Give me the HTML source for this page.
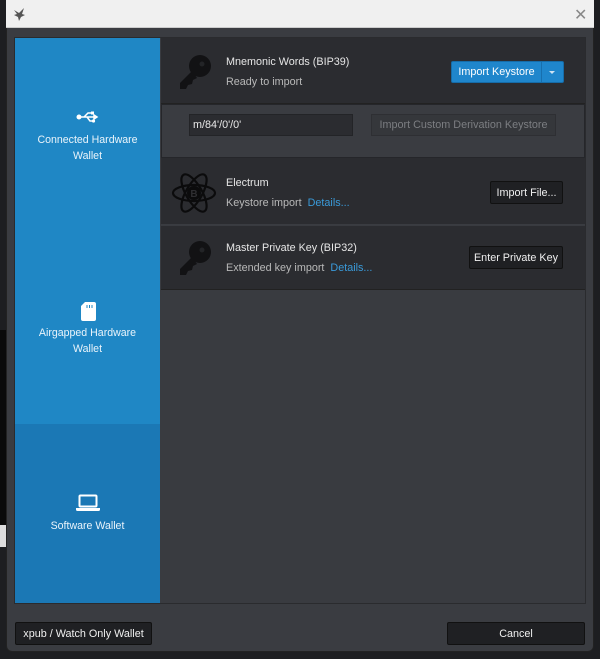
<!DOCTYPE html>
<html><head><meta charset="utf-8"><style>
*{margin:0;padding:0;box-sizing:border-box}
body{width:600px;height:659px;background:#1d1e21;position:relative;overflow:hidden;font-family:"Liberation Sans",sans-serif;font-size:10.8px;color:#e6e6e6}
.a{position:absolute}
.btn{position:absolute;background:#1f2023;border:1px solid #111;border-radius:2px;color:#f0f0f0;font-size:10.8px;display:flex;align-items:center;justify-content:center}
.lnk{color:#3a9ad9}
.sub{color:#b9b9b9}
.side{color:#eaf4fb;text-align:center;font-size:10.6px;line-height:16px}
</style></head><body>
<div class="a" style="left:0;top:330px;width:6px;height:195px;background:#0a0a0a"></div>
<div class="a" style="left:0;top:525px;width:6px;height:22px;background:#ddd"></div>
<div class="a" style="left:6px;top:0;width:588px;height:652px;background:#3a3c41;border-radius:0 0 6px 6px;border:1px solid #222"></div>
<div class="a" style="left:6px;top:0;width:588px;height:28px;background:#f0f0f0;border-bottom:1px solid #ccc"></div>
<svg class="a" style="left:11px;top:6px" width="16" height="16" viewBox="0 0 16 16"><path d="M3 4l5 3 5-5-2 6 3 1-4 2-2 4-1-4-4-2 3-1z" fill="#555"/></svg>
<div class="a" style="left:574px;top:5px;font-size:16px;color:#888">✕</div>
<div class="a" style="left:14px;top:37px;width:572px;height:567px;background:#393b40;border:1px solid #2a2b2e"></div>
<div class="a" style="left:15px;top:38px;width:145px;height:386px;background:#1f87c5"></div>
<div class="a" style="left:15px;top:424px;width:145px;height:179px;background:#1b78b5"></div>
<svg class="a" style="left:76px;top:110px" width="24" height="14" viewBox="0 0 24 14"><path d="M3 7h18M21 7l-3-2v4zM8 7l4-4h3M11 7l3 4h3" stroke="#fff" stroke-width="1.5" fill="none"/><circle cx="3" cy="7" r="2.5" fill="#fff"/><rect x="15" y="1.5" width="3" height="3" fill="#fff"/><circle cx="17.5" cy="11" r="1.6" fill="#fff"/></svg>
<div class="a side" style="left:15px;top:132px;width:145px">Connected Hardware<br>Wallet</div>
<svg class="a" style="left:81px;top:302px" width="15" height="19" viewBox="0 0 15 19"><path d="M4 0h9a2 2 0 0 1 2 2v15a2 2 0 0 1-2 2H2a2 2 0 0 1-2-2V4z" fill="#fff"/><path d="M6 3v3M8.5 3v3M11 3v3" stroke="#1f87c5" stroke-width="1"/></svg>
<div class="a side" style="left:15px;top:325px;width:145px">Airgapped Hardware<br>Wallet</div>
<svg class="a" style="left:76px;top:494px" width="24" height="18" viewBox="0 0 24 18"><rect x="3.5" y="1.5" width="17" height="11" rx="1" stroke="#fff" stroke-width="2" fill="none"/><path d="M0 14h24v1.5a1.5 1.5 0 0 1-1.5 1.5h-21A1.5 1.5 0 0 1 0 15.5z" fill="#fff"/></svg>
<div class="a side" style="left:15px;top:518px;width:145px">Software Wallet</div>
<div class="a" style="left:161px;top:38px;width:424px;height:66px;background:#2b2c30;border-bottom:1px solid #222"></div>
<div class="a" style="left:161px;top:104px;width:424px;height:54px;background:#3a3c41;border:1px solid #25262a"></div>
<div class="a" style="left:161px;top:158px;width:424px;height:67px;background:#2b2c30;border-bottom:1px solid #3a3c41"></div>
<div class="a" style="left:161px;top:226px;width:424px;height:64px;background:#2b2c30;border-bottom:1px solid #222"></div>
<svg class="a" style="left:175px;top:52px" width="40" height="40" viewBox="0 0 40 40"><circle cx="25" cy="14" r="11" fill="#121214"/><path d="M17 19L5 31v6h6l2-4 4-1 1-4 4-2z" fill="#121214"/><circle cx="27" cy="12" r="2.5" fill="#232427"/></svg>
<svg class="a" style="left:175px;top:238px" width="40" height="40" viewBox="0 0 40 40"><circle cx="25" cy="14" r="11" fill="#121214"/><path d="M17 19L5 31v6h6l2-4 4-1 1-4 4-2z" fill="#121214"/><circle cx="27" cy="12" r="2.5" fill="#232427"/></svg>
<svg class="a" style="left:171px;top:172px" width="46" height="42" viewBox="0 0 46 42"><g stroke="#0b0b0c" stroke-width="2.2" fill="none"><ellipse cx="23" cy="21" rx="21" ry="8"/><ellipse cx="23" cy="21" rx="21" ry="8" transform="rotate(60 23 21)"/><ellipse cx="23" cy="21" rx="21" ry="8" transform="rotate(-60 23 21)"/></g><circle cx="23" cy="21" r="7" fill="#0b0b0c"/><text x="23" y="25" font-size="10" text-anchor="middle" fill="#2e2e31" font-family="Liberation Sans" font-weight="bold">B</text></svg>
<div class="a" style="left:226px;top:56px">Mnemonic Words (BIP39)</div>
<div class="a sub" style="left:226px;top:76px">Ready to import</div>
<div class="a" style="left:451px;top:61px;width:113px;height:22px;background:#1f86cc;border-radius:2px;border:1px solid #166ca8"></div>
<div class="a" style="left:451px;top:61px;width:91px;height:22px;display:flex;align-items:center;justify-content:center;color:#fff">Import Keystore</div>
<div class="a" style="left:541px;top:62px;width:1px;height:20px;background:#176fae"></div>
<div class="a" style="left:549px;top:66px;width:0;height:0;border-left:3px solid transparent;border-right:3px solid transparent;border-top:3px solid #cfe3f3;top:71px"></div>
<div class="a" style="left:189px;top:114px;width:164px;height:22px;background:#2b2c30;border:1px solid #232427"></div>
<div class="a" style="left:193px;top:119px;color:#e8e8e8">m/84'/0'/0'</div>
<div class="a" style="left:371px;top:114px;width:185px;height:22px;background:#35373b;border:1px solid #2e2f33;display:flex;align-items:center;justify-content:center;color:#7c7e82">Import Custom Derivation Keystore</div>
<div class="a" style="left:226px;top:177px">Electrum</div>
<div class="a sub" style="left:226px;top:197px">Keystore import <span class="lnk">&nbsp;Details...</span></div>
<div class="btn" style="left:490px;top:181px;width:73px;height:23px">Import File...</div>
<div class="a" style="left:226px;top:242px">Master Private Key (BIP32)</div>
<div class="a sub" style="left:226px;top:262px">Extended key import <span class="lnk">&nbsp;Details...</span></div>
<div class="btn" style="left:469px;top:246px;width:94px;height:23px">Enter Private Key</div>
<div class="btn" style="left:15px;top:622px;width:137px;height:23px">xpub / Watch Only Wallet</div>
<div class="btn" style="left:447px;top:622px;width:138px;height:23px">Cancel</div>
</body></html>
